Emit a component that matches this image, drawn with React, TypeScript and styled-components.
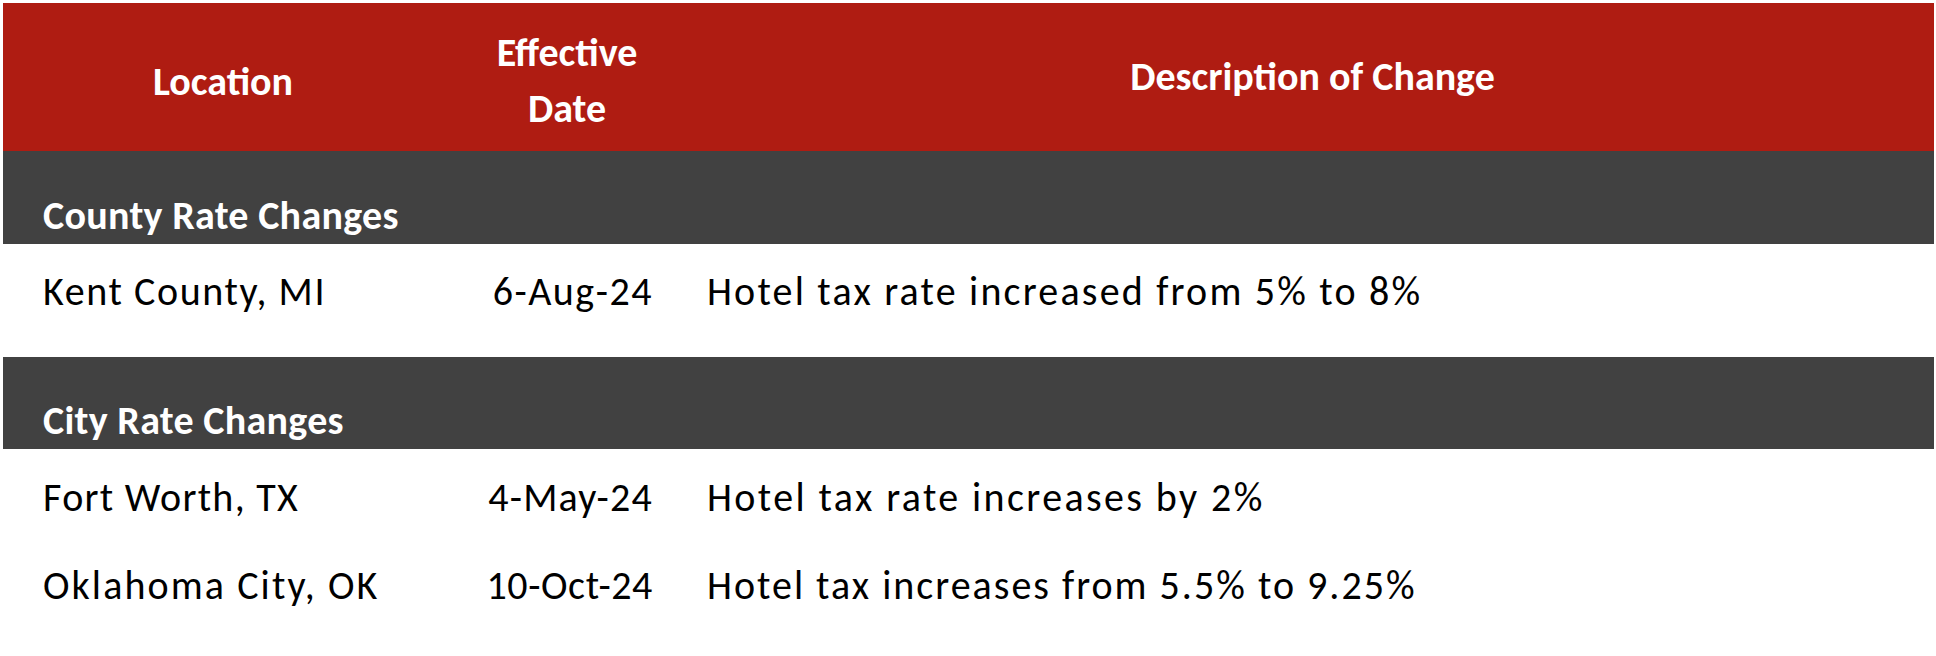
import React from "react";
import styled, { createGlobalStyle } from "styled-components";

const Global = createGlobalStyle`
  html, body { margin: 0; padding: 0; background: #ffffff; }
  body { font-family: Carlito, Lato, "Liberation Sans", sans-serif; }
`;

const Table = styled.div`
  margin: 3px 2px 0 3px;
  display: flex;
  flex-direction: column;
`;

const Columns = `
  display: grid;
  grid-template-columns: 440px 248px 1fr;
`;

const HeaderRow = styled.div`
  ${Columns}
  height: 148px;
  background: #af1c12;
  color: #ffffff;
  font-weight: 700;
  font-size: 40px;
`;

const HeaderCell = styled.div<{ $shift: number }>`
  display: flex;
  align-items: center;
  justify-content: center;
  text-align: center;
  line-height: 56px;
  padding-top: ${(p) => p.$shift}px;
`;

const SectionBand = styled.div<{ $height: number }>`
  height: ${(p) => p.$height}px;
  background: #414141;
  color: #ffffff;
  font-weight: 700;
  font-size: 40px;
  line-height: 40px;
  display: flex;
  align-items: flex-end;
  padding: 0 0 8px 40px;
  box-sizing: border-box;
  letter-spacing: 0.3px;
`;

const DataRow = styled.div<{ $height: number; $top: number }>`
  ${Columns}
  height: ${(p) => p.$height}px;
  box-sizing: border-box;
  padding-top: ${(p) => p.$top}px;
  font-size: 40px;
  line-height: 40px;
  color: #000000;
`;

const LocationCell = styled.div<{ $spacing: number }>`
  padding-left: 40px;
  white-space: nowrap;
  letter-spacing: ${(p) => p.$spacing}px;
`;

const DateCell = styled.div<{ $spacing: number }>`
  text-align: right;
  padding-right: 38px;
  white-space: nowrap;
  letter-spacing: ${(p) => p.$spacing}px;
`;

const DescCell = styled.div<{ $spacing: number }>`
  padding-left: 16px;
  white-space: nowrap;
  letter-spacing: ${(p) => p.$spacing}px;
`;

type Row = {
  loc: string;
  date: string;
  desc: string;
  h: number;
  top: number;
  ls: [number, number, number];
};

const sections: { title: string; band: number; rows: Row[] }[] = [
  {
    title: "County Rate Changes",
    band: 93,
    rows: [
      {
        loc: "Kent County, MI",
        date: "6-Aug-24",
        desc: "Hotel tax rate increased from 5% to 8%",
        h: 113,
        top: 28,
        ls: [1.6, 1.5, 2.2],
      },
    ],
  },
  {
    title: "City Rate Changes",
    band: 92,
    rows: [
      {
        loc: "Fort Worth, TX",
        date: "4-May-24",
        desc: "Hotel tax rate increases by 2%",
        h: 88,
        top: 29,
        ls: [1.3, 1.2, 2.4],
      },
      {
        loc: "Oklahoma City, OK",
        date: "10-Oct-24",
        desc: "Hotel tax increases from 5.5% to 9.25%",
        h: 88,
        top: 29,
        ls: [2.1, 0.6, 2.0],
      },
    ],
  },
];

export default function App() {
  return (
    <>
      <Global />
      <Table>
        <HeaderRow>
          <HeaderCell $shift={10}>Location</HeaderCell>
          <HeaderCell $shift={8}>
            Effective
            <br />
            Date
          </HeaderCell>
          <HeaderCell $shift={0}>Description of Change</HeaderCell>
        </HeaderRow>
        {sections.map((s) => (
          <React.Fragment key={s.title}>
            <SectionBand $height={s.band}>{s.title}</SectionBand>
            {s.rows.map((r) => (
              <DataRow key={r.loc} $height={r.h} $top={r.top}>
                <LocationCell $spacing={r.ls[0]}>{r.loc}</LocationCell>
                <DateCell $spacing={r.ls[1]}>{r.date}</DateCell>
                <DescCell $spacing={r.ls[2]}>{r.desc}</DescCell>
              </DataRow>
            ))}
          </React.Fragment>
        ))}
      </Table>
    </>
  );
}
